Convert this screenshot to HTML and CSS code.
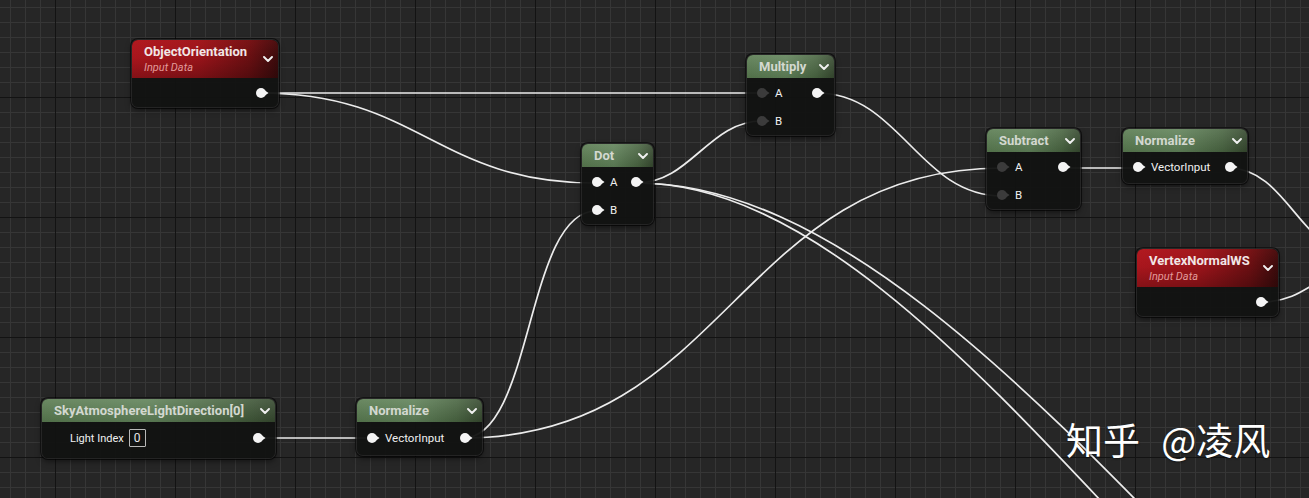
FILE: index.html
```html
<!DOCTYPE html>
<html lang="en">
<head>
<meta charset="utf-8">
<title>Material Graph</title>
<link rel="stylesheet" href="styles.css">
</head>
<body>
<div class="graph">
  <svg class="wires" width="1309" height="498" viewBox="0 0 1309 498">
    <path d="M260,93 L762,93"/>
    <path d="M260,93 C420,93 436,183 596,183"/>
    <path d="M637,183 C690,183 709,121 762,121"/>
    <path d="M817,93 C900,93 919,196 1002,196"/>
    <path d="M463,438 C533,438 526,211 596,211"/>
    <path d="M463,438 C728,438 737,168 1002,168"/>
    <path d="M257,438 L372,438"/>
    <path d="M1063,168 L1135,168"/>
    <path d="M1228,168 C1290,168 1300,260 1370,260"/>
    <path d="M1262,302 C1310,302 1320,265 1370,265"/>
    <path d="M637,183 C950,183 1250,800 1500,800"/>
    <path d="M637,183 C990,183 1350,860 1600,860"/>
  </svg>

  <div class="node node-obj">
    <div class="header header-red">
      <div class="titles">
        <span class="title">ObjectOrientation</span>
        <span class="subtitle">Input Data</span>
      </div>
      <svg class="chev" width="10" height="6" viewBox="0 0 10 6"><polyline points="1,1 5,5 9,1"/></svg>
    </div>
    <div class="body">
      <div class="row row-out"><svg class="pin" width="13" height="10" viewBox="0 0 13 10"><circle cx="5" cy="5" r="5"/><polygon points="9,2.5 12.5,5 9,7.5"/></svg></div>
    </div>
  </div>

  <div class="node node-mul">
    <div class="header header-green">
      <span class="title">Multiply</span>
      <svg class="chev" width="10" height="6" viewBox="0 0 10 6"><polyline points="1,1 5,5 9,1"/></svg>
    </div>
    <div class="body">
      <div class="row">
        <div class="in"><svg class="pin dim" width="13" height="10" viewBox="0 0 13 10"><circle cx="5" cy="5" r="5"/><polygon points="9,2.5 12.5,5 9,7.5"/></svg><span class="label">A</span></div>
        <svg class="pin" width="13" height="10" viewBox="0 0 13 10"><circle cx="5" cy="5" r="5"/><polygon points="9,2.5 12.5,5 9,7.5"/></svg>
      </div>
      <div class="row">
        <div class="in"><svg class="pin dim" width="13" height="10" viewBox="0 0 13 10"><circle cx="5" cy="5" r="5"/><polygon points="9,2.5 12.5,5 9,7.5"/></svg><span class="label">B</span></div>
      </div>
    </div>
  </div>

  <div class="node node-dot">
    <div class="header header-green">
      <span class="title">Dot</span>
      <svg class="chev" width="10" height="6" viewBox="0 0 10 6"><polyline points="1,1 5,5 9,1"/></svg>
    </div>
    <div class="body">
      <div class="row">
        <div class="in"><svg class="pin" width="13" height="10" viewBox="0 0 13 10"><circle cx="5" cy="5" r="5"/><polygon points="9,2.5 12.5,5 9,7.5"/></svg><span class="label">A</span></div>
        <svg class="pin" width="13" height="10" viewBox="0 0 13 10"><circle cx="5" cy="5" r="5"/><polygon points="9,2.5 12.5,5 9,7.5"/></svg>
      </div>
      <div class="row">
        <div class="in"><svg class="pin" width="13" height="10" viewBox="0 0 13 10"><circle cx="5" cy="5" r="5"/><polygon points="9,2.5 12.5,5 9,7.5"/></svg><span class="label">B</span></div>
      </div>
    </div>
  </div>

  <div class="node node-sub">
    <div class="header header-green">
      <span class="title">Subtract</span>
      <svg class="chev" width="10" height="6" viewBox="0 0 10 6"><polyline points="1,1 5,5 9,1"/></svg>
    </div>
    <div class="body">
      <div class="row">
        <div class="in"><svg class="pin dim" width="13" height="10" viewBox="0 0 13 10"><circle cx="5" cy="5" r="5"/><polygon points="9,2.5 12.5,5 9,7.5"/></svg><span class="label">A</span></div>
        <svg class="pin" width="13" height="10" viewBox="0 0 13 10"><circle cx="5" cy="5" r="5"/><polygon points="9,2.5 12.5,5 9,7.5"/></svg>
      </div>
      <div class="row">
        <div class="in"><svg class="pin dim" width="13" height="10" viewBox="0 0 13 10"><circle cx="5" cy="5" r="5"/><polygon points="9,2.5 12.5,5 9,7.5"/></svg><span class="label">B</span></div>
      </div>
    </div>
  </div>

  <div class="node node-norm1">
    <div class="header header-green">
      <span class="title">Normalize</span>
      <svg class="chev" width="10" height="6" viewBox="0 0 10 6"><polyline points="1,1 5,5 9,1"/></svg>
    </div>
    <div class="body body-tight">
      <div class="row">
        <div class="in"><svg class="pin" width="13" height="10" viewBox="0 0 13 10"><circle cx="5" cy="5" r="5"/><polygon points="9,2.5 12.5,5 9,7.5"/></svg><span class="label">VectorInput</span></div>
        <svg class="pin" width="13" height="10" viewBox="0 0 13 10"><circle cx="5" cy="5" r="5"/><polygon points="9,2.5 12.5,5 9,7.5"/></svg>
      </div>
    </div>
  </div>

  <div class="node node-vnws">
    <div class="header header-red">
      <div class="titles">
        <span class="title">VertexNormalWS</span>
        <span class="subtitle">Input Data</span>
      </div>
      <svg class="chev" width="10" height="6" viewBox="0 0 10 6"><polyline points="1,1 5,5 9,1"/></svg>
    </div>
    <div class="body">
      <div class="row row-out"><svg class="pin" width="13" height="10" viewBox="0 0 13 10"><circle cx="5" cy="5" r="5"/><polygon points="9,2.5 12.5,5 9,7.5"/></svg></div>
    </div>
  </div>

  <div class="node node-sky">
    <div class="header header-green">
      <span class="title">SkyAtmosphereLightDirection[0]</span>
      <svg class="chev" width="10" height="6" viewBox="0 0 10 6"><polyline points="1,1 5,5 9,1"/></svg>
    </div>
    <div class="body body-sky">
      <div class="row row-sky">
        <div class="in in-param"><span class="label">Light Index</span><span class="numbox">0</span></div>
        <svg class="pin" width="13" height="10" viewBox="0 0 13 10"><circle cx="5" cy="5" r="5"/><polygon points="9,2.5 12.5,5 9,7.5"/></svg>
      </div>
    </div>
  </div>

  <div class="node node-norm2">
    <div class="header header-green">
      <span class="title">Normalize</span>
      <svg class="chev" width="10" height="6" viewBox="0 0 10 6"><polyline points="1,1 5,5 9,1"/></svg>
    </div>
    <div class="body body-tight">
      <div class="row row-sky">
        <div class="in"><svg class="pin" width="13" height="10" viewBox="0 0 13 10"><circle cx="5" cy="5" r="5"/><polygon points="9,2.5 12.5,5 9,7.5"/></svg><span class="label">VectorInput</span></div>
        <svg class="pin" width="13" height="10" viewBox="0 0 13 10"><circle cx="5" cy="5" r="5"/><polygon points="9,2.5 12.5,5 9,7.5"/></svg>
      </div>
    </div>
  </div>

  <div class="watermark">知乎 @凌风</div>
</div>
</body>
</html>
```

FILE: styles.css
```css
* { box-sizing: border-box; }

html, body {
  margin: 0;
  padding: 0;
  background: #262626;
}

.graph {
  position: relative;
  width: 1309px;
  height: 498px;
  overflow: hidden;
  font-family: Roboto, "Liberation Sans", sans-serif;
  background-color: #262626;
  background-image:
    linear-gradient(to right, #131313 1px, transparent 1px),
    linear-gradient(to bottom, #131313 1px, transparent 1px),
    linear-gradient(to right, #363636 1px, transparent 1px),
    linear-gradient(to bottom, #363636 1px, transparent 1px);
  background-size: 120px 120px, 120px 120px, 15px 15px, 15px 15px;
  background-position: 55px 0, 0 97px, 10px 0, 0 7px;
}

.wires {
  position: absolute;
  left: 0;
  top: 0;
}

.wires path {
  fill: none;
  stroke: #ececec;
  stroke-width: 1.7;
}

.node {
  position: absolute;
  border-radius: 6px;
  background: rgba(18, 19, 18, 0.96);
  box-shadow: 0 0 0 1px rgba(60, 60, 60, 0.55), 0 0 0 2px rgba(0, 0, 0, 0.6), 0 3px 6px rgba(0, 0, 0, 0.55);
  color: #f2f2f2;
}

.node-obj   { left: 132px;  top: 40px;  width: 146px; }
.node-mul   { left: 747px;  top: 55px;  width: 87px; }
.node-dot   { left: 582px;  top: 144px; width: 71px; }
.node-sub   { left: 987px;  top: 129px; width: 93px; }
.node-norm1 { left: 1123px; top: 129px; width: 124px; }
.node-vnws  { left: 1137px; top: 249px; width: 141px; }
.node-sky   { left: 42px;   top: 399px; width: 233px; }
.node-norm2 { left: 357px;  top: 399px; width: 125px; }

.header {
  display: flex;
  align-items: center;
  justify-content: space-between;
  padding: 0 5px 0 12px;
  border-radius: 6px 6px 0 0;
}

.header-green {
  height: 23px;
  background:
    linear-gradient(to bottom, rgba(255, 255, 255, 0.10), rgba(0, 0, 0, 0.10)),
    linear-gradient(to right, #5a7c51 0%, #61835a 45%, #4a6642 80%, #36492f 100%);
}

.header-red {
  height: 38px;
  background:
    linear-gradient(to bottom, rgba(255, 60, 60, 0.10) 0%, rgba(0, 0, 0, 0) 45%, rgba(0, 0, 0, 0.22) 100%),
    linear-gradient(to right, #a9161d 0%, #9a141a 45%, #6a0f12 80%, #3a0b0c 100%);
}

.titles {
  display: flex;
  flex-direction: column;
  line-height: 16px;
  padding-top: 1px;
}

.title {
  font-size: 13px;
  font-weight: 700;
  color: #d3d8d0;
  white-space: nowrap;
}

.header-red .title {
  color: #f1e6e6;
}

.subtitle {
  font-size: 11px;
  font-style: italic;
  color: #e39a9a;
  white-space: nowrap;
}

.chev {
  flex: none;
}

.chev polyline {
  fill: none;
  stroke: #f0f0f0;
  stroke-width: 1.9;
  stroke-linecap: round;
  stroke-linejoin: round;
}

.body {
  padding: 1px 0 0 0;
}

.body-tight {
  padding: 1px 0 2px 0;
}

.body-sky {
  padding: 1px 0 5px 0;
}

.row {
  height: 28px;
  display: flex;
  align-items: center;
  justify-content: space-between;
  padding: 0 9px 0 10px;
}

.row-sky {
  height: 30px;
}

.row-out {
  justify-content: flex-end;
}

.in {
  display: flex;
  align-items: center;
}

.in-param {
  padding-left: 18px;
}

.pin {
  flex: none;
  display: block;
}

.pin circle, .pin polygon {
  fill: #f4f4f4;
}

.pin.dim circle, .pin.dim polygon {
  fill: #3b3b3b;
}

.label {
  margin-left: 5px;
  font-size: 11.5px;
  color: #f0f0f0;
  white-space: nowrap;
}

.in-param .label {
  margin-left: 0;
  font-size: 11px;
}

.numbox {
  margin-left: 5px;
  width: 17px;
  height: 18px;
  border: 1px solid #b8b8b8;
  border-radius: 1px;
  font-size: 12px;
  line-height: 16px;
  text-align: center;
  color: #e8e8e8;
}

.watermark {
  position: absolute;
  left: 1066px;
  top: 414px;
  font-family: "Noto Sans CJK SC", "Noto Sans", sans-serif;
  font-size: 37px;
  line-height: 50px;
  word-spacing: 13px;
  color: #ffffff;
  white-space: nowrap;
  text-shadow: 0 1px 2px rgba(0, 0, 0, 0.5);
}
```
